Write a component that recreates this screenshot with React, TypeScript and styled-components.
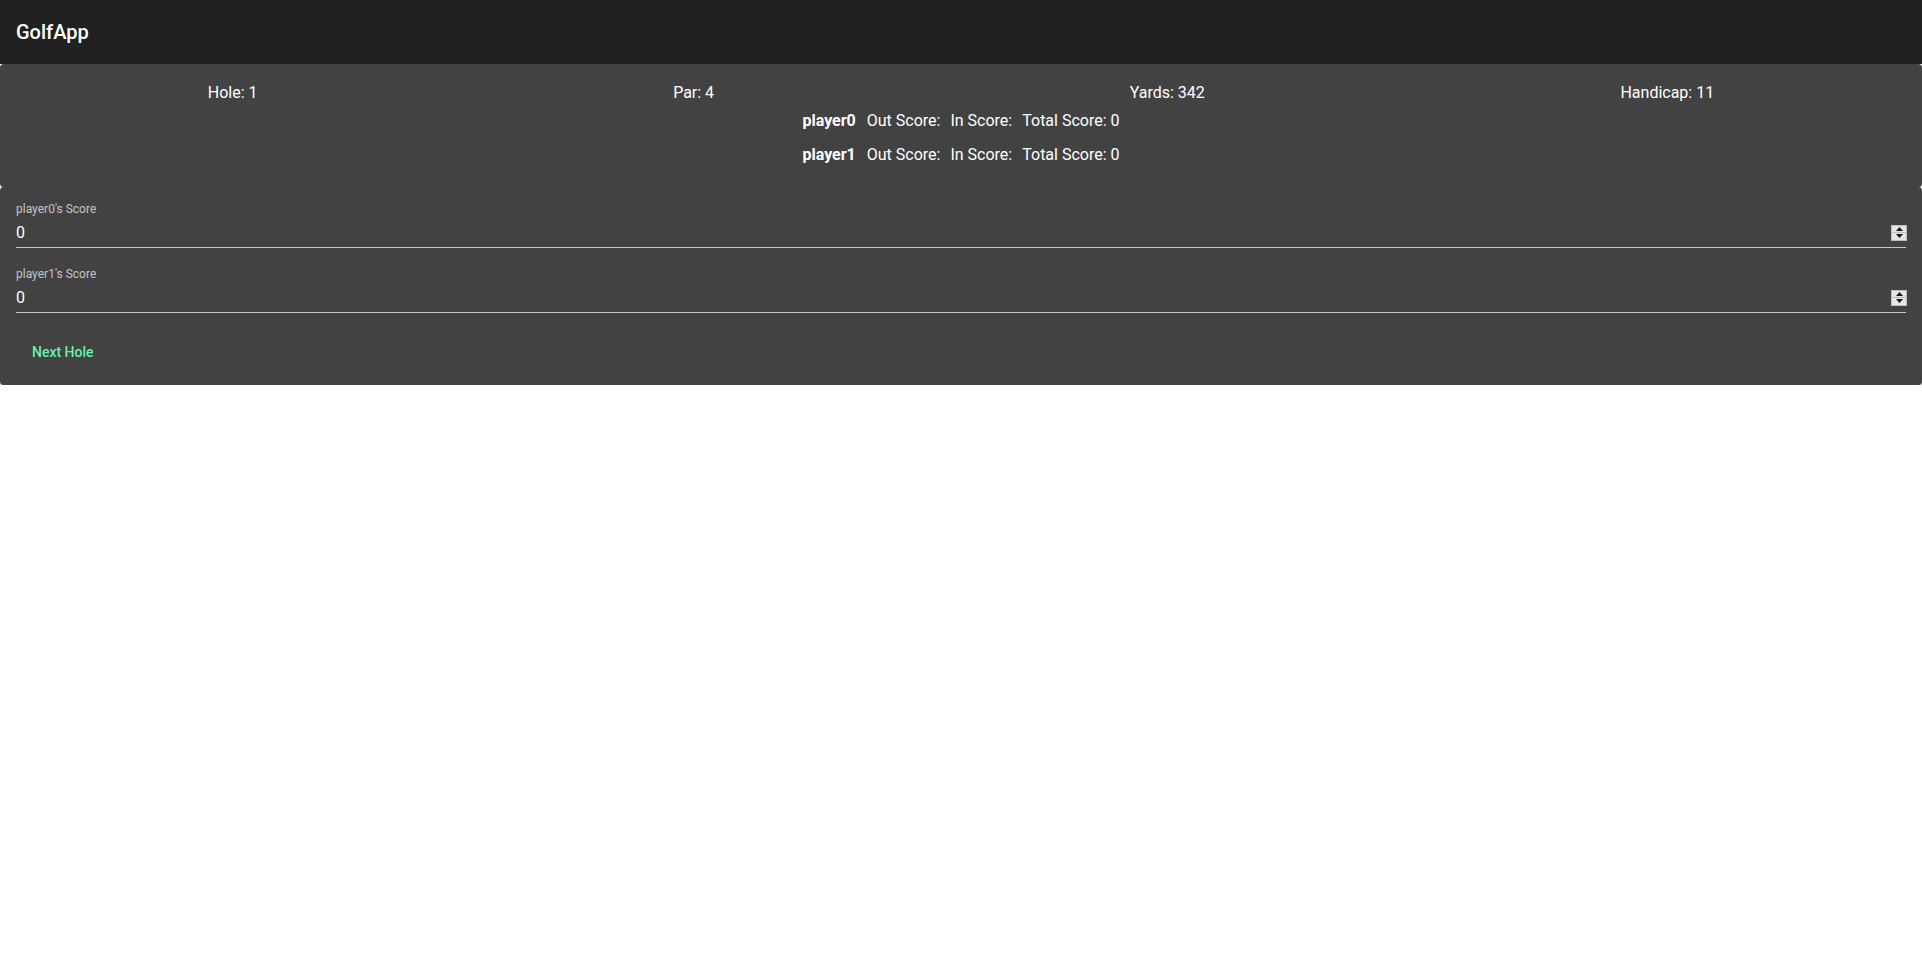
import React, { useState } from 'react';
import styled, { createGlobalStyle } from 'styled-components';

const GlobalStyle = createGlobalStyle`
    body {
        margin: 0;
        background: #fff;
        font-family: Roboto, 'Liberation Sans', sans-serif;
    }
    * {
        box-sizing: border-box;
    }
`;

const AppBar = styled.header`
    height: 64px;
    background-color: #212121;
    display: flex;
    align-items: center;
    padding: 0 16px;
`;

const Title = styled.h1`
    margin: 0;
    color: #fff;
    font-size: 20px;
    font-weight: 500;
    line-height: 1.6;
`;

const Paper = styled.section<{ $pad: string }>`
    background-color: #424242;
    color: #fff;
    border-radius: 4px;
    padding: ${(p) => p.$pad};
    box-shadow: 0px 2px 1px -1px rgba(0, 0, 0, 0.2), 0px 1px 1px 0px rgba(0, 0, 0, 0.14),
        0px 1px 3px 0px rgba(0, 0, 0, 0.12);
`;

const InfoRow = styled.div`
    display: flex;
    justify-content: space-around;
    font-size: 16px;
    line-height: 24px;
`;

const PlayerRow = styled.div`
    display: flex;
    justify-content: center;
    gap: 10px;
    padding: 4px 0 6px;
    font-size: 16px;
    line-height: 24px;
`;

const PlayerName = styled.span`
    font-weight: 700;
    margin-right: 1px;
`;

const Field = styled.div`
    display: flex;
    flex-direction: column;
    margin-bottom: 20px;
`;

const Label = styled.label`
    font-size: 12px;
    line-height: 12px;
    color: rgba(255, 255, 255, 0.7);
`;

const InputRow = styled.div`
    display: flex;
    align-items: center;
    margin-top: 4px;
    padding: 4px 0 5px;
    border-bottom: 1px solid rgba(255, 255, 255, 0.7);
`;

const Input = styled.input`
    flex: 1;
    min-width: 0;
    border: none;
    outline: none;
    background: transparent;
    color: #fff;
    padding: 0;
    font-family: Roboto, 'Liberation Sans', sans-serif;
    font-size: 16px;
    line-height: 19px;
    height: 19px;
    -moz-appearance: textfield;
    &::-webkit-inner-spin-button,
    &::-webkit-outer-spin-button {
        -webkit-appearance: none;
        margin: 0;
    }
`;

const Spinner = styled.div`
    display: flex;
    flex-direction: column;
    width: 16px;
    height: 16px;
    margin-right: -1px;
    border: 1px solid #bdbdbd;
    background: #bdbdbd;
    gap: 1px;
`;

const SpinButton = styled.button`
    flex: 1;
    display: flex;
    align-items: center;
    justify-content: center;
    padding: 0;
    border: none;
    background: #e6e6e6;
    cursor: default;
`;

const NextButton = styled.button`
    margin: 1px 0 0 8px;
    padding: 6px 8px;
    border: none;
    border-radius: 4px;
    background: transparent;
    color: #69f0ae;
    font-family: Roboto, 'Liberation Sans', sans-serif;
    font-size: 14px;
    font-weight: 500;
    line-height: 1.75;
    cursor: pointer;
`;

const Arrow = ({ up }: { up?: boolean }) => (
    <svg width="7" height="4" viewBox="0 0 7 4">
        <path d={up ? 'M0 4 L3.5 0 L7 4 Z' : 'M0 0 L7 0 L3.5 4 Z'} fill="#1a1a1a" />
    </svg>
);

const players = ['player0', 'player1'];

const App = () => {
    const [scores, setScores] = useState<number[]>([0, 0]);

    const change = (i: number, v: number) => {
        setScores((s) => s.map((x, j) => (j === i ? v : x)));
    };

    return (
        <>
            <GlobalStyle />
            <AppBar>
                <Title>GolfApp</Title>
            </AppBar>
            <Paper $pad="17px 0 14px">
                <InfoRow>
                    <span>Hole: 1</span>
                    <span>Par: 4</span>
                    <span>Yards: 342</span>
                    <span>Handicap: 11</span>
                </InfoRow>
                {players.map((p) => (
                    <PlayerRow key={p}>
                        <PlayerName>{p}</PlayerName>
                        <span>Out Score:</span>
                        <span>In Score:</span>
                        <span>Total Score: 0</span>
                    </PlayerRow>
                ))}
            </Paper>
            <Paper $pad="16px 16px 14px">
                {players.map((p, i) => (
                    <Field key={p}>
                        <Label htmlFor={`score-${i}`}>{p}'s Score</Label>
                        <InputRow>
                            <Input
                                id={`score-${i}`}
                                type="number"
                                value={scores[i]}
                                onChange={(e) => change(i, Number(e.target.value))}
                            />
                            <Spinner>
                                <SpinButton onClick={() => change(i, scores[i] + 1)}>
                                    <Arrow up />
                                </SpinButton>
                                <SpinButton onClick={() => change(i, scores[i] - 1)}>
                                    <Arrow />
                                </SpinButton>
                            </Spinner>
                        </InputRow>
                    </Field>
                ))}
                <NextButton>Next Hole</NextButton>
            </Paper>
        </>
    );
};

export default App;
